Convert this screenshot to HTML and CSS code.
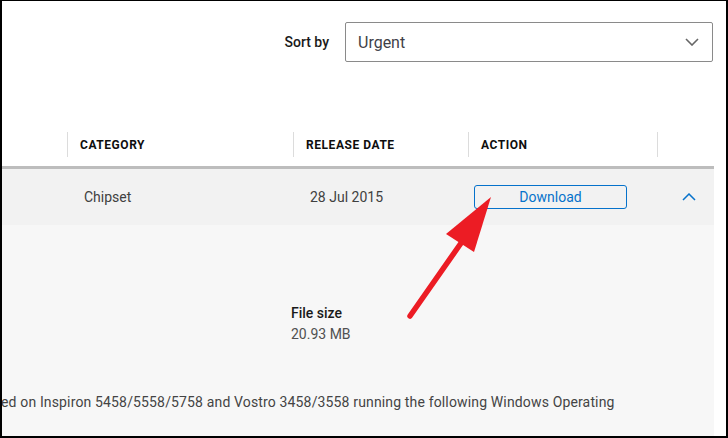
FILE: index.html
```html
<!DOCTYPE html>
<html lang="en">
<head>
<meta charset="utf-8">
<title>Drivers</title>
<link rel="stylesheet" href="styles.css">
</head>
<body>
<div class="frame">
  <div class="page">
    <div class="toolbar">
      <span class="sort-label">Sort by</span>
      <div class="select">
        <span class="select-value">Urgent</span>
        <svg class="select-chevron" width="14" height="8" viewBox="0 0 14 8"><polyline points="1,1 7,7 13,1" fill="none" stroke="#666" stroke-width="1.6"/></svg>
      </div>
    </div>
    <div class="table">
      <div class="thead">
        <div class="th th-blank"></div>
        <div class="th">CATEGORY</div>
        <div class="th">RELEASE DATE</div>
        <div class="th">ACTION</div>
        <div class="th"></div>
      </div>
      <div class="row">
        <div class="td"></div>
        <div class="td td-text">Chipset</div>
        <div class="td td-text">28 Jul 2015</div>
        <div class="td td-action"><button class="btn-download">Download</button></div>
        <div class="td td-toggle">
          <svg width="14" height="8" viewBox="0 0 14 8"><polyline points="1,7 7,1 13,7" fill="none" stroke="#0672cb" stroke-width="1.5"/></svg>
        </div>
      </div>
      <div class="details">
        <div class="meta">
          <div class="meta-label">File size</div>
          <div class="meta-value">20.93 MB</div>
        </div>
        <p class="desc">ed on Inspiron 5458/5558/5758 and Vostro 3458/3558 running the following Windows Operating</p>
      </div>
    </div>
  </div>
  <svg class="arrow" width="728" height="438" viewBox="0 0 728 438">
    <line x1="410" y1="316" x2="466" y2="236" stroke="#ec1c24" stroke-width="5.5" stroke-linecap="round"/>
    <polygon points="491,197 446,234 474,252" fill="#ec1c24"/>
  </svg>
</div>
</body>
</html>
```

FILE: styles.css
```css
* { box-sizing: border-box; }

html, body {
  margin: 0;
  padding: 0;
  background: #ffffff;
}

body {
  font-family: Roboto, "Liberation Sans", Arial, sans-serif;
  font-size: 14px;
  color: #444;
}

.frame {
  position: relative;
  width: 728px;
  height: 438px;
  border-style: solid;
  border-color: #000;
  border-width: 1px 2px 2px 2px;
  background: #fff;
  overflow: hidden;
}

.page {
  width: 712px;
  height: 435px;
  display: flex;
  flex-direction: column;
  overflow: hidden;
}

.toolbar {
  display: flex;
  justify-content: flex-end;
  align-items: center;
  gap: 16px;
  padding: 21px 1px 0 0;
}

.sort-label {
  font-size: 14px;
  font-weight: 500;
  color: #1a1a1a;
}

.select {
  width: 368px;
  height: 40px;
  border: 1px solid #8a8a8a;
  border-radius: 2px;
  display: flex;
  align-items: center;
  justify-content: space-between;
  padding: 0 13px 0 12px;
}

.select-value {
  font-size: 16px;
  color: #3f3f48;
}

.table {
  margin-top: 70px;
  flex: 1;
  display: flex;
  flex-direction: column;
}

.thead,
.row {
  display: grid;
  grid-template-columns: 65px 226px 175px 189px 57px;
}

.thead {
  padding-bottom: 9px;
  border-bottom: 3px solid #bdbdbd;
}

.th {
  height: 25px;
  border-left: 1px solid #dcdcdc;
  padding-left: 12px;
  display: flex;
  align-items: center;
  font-size: 12px;
  font-weight: 700;
  letter-spacing: 0.55px;
  color: #0e0e0e;
}

.th-blank {
  border-left: none;
}

.row {
  height: 56px;
  background: #f2f2f2;
  align-items: center;
}

.td-text {
  padding-left: 17px;
  color: #404040;
}

.td-action {
  padding-left: 6px;
}

.btn-download {
  width: 153px;
  height: 24px;
  border: 1px solid #0672cb;
  border-radius: 3px;
  background: transparent;
  color: #0672cb;
  font-family: inherit;
  font-size: 14px;
  padding: 0;
}

.td-toggle {
  padding-left: 25px;
  display: flex;
  align-items: center;
}

.details {
  flex: 1;
  background: #f7f7f7;
  padding-top: 78px;
}

.meta {
  margin-left: 289px;
  line-height: 21px;
}

.meta-label {
  font-weight: 500;
  color: #1a1a1a;
}

.meta-value {
  color: #505050;
}

.desc {
  margin: 47px 0 0 -1px;
  line-height: 20px;
  color: #444;
  letter-spacing: 0.15px;
  white-space: nowrap;
}

.arrow {
  position: absolute;
  left: -2px;
  top: -1px;
  pointer-events: none;
}
```
